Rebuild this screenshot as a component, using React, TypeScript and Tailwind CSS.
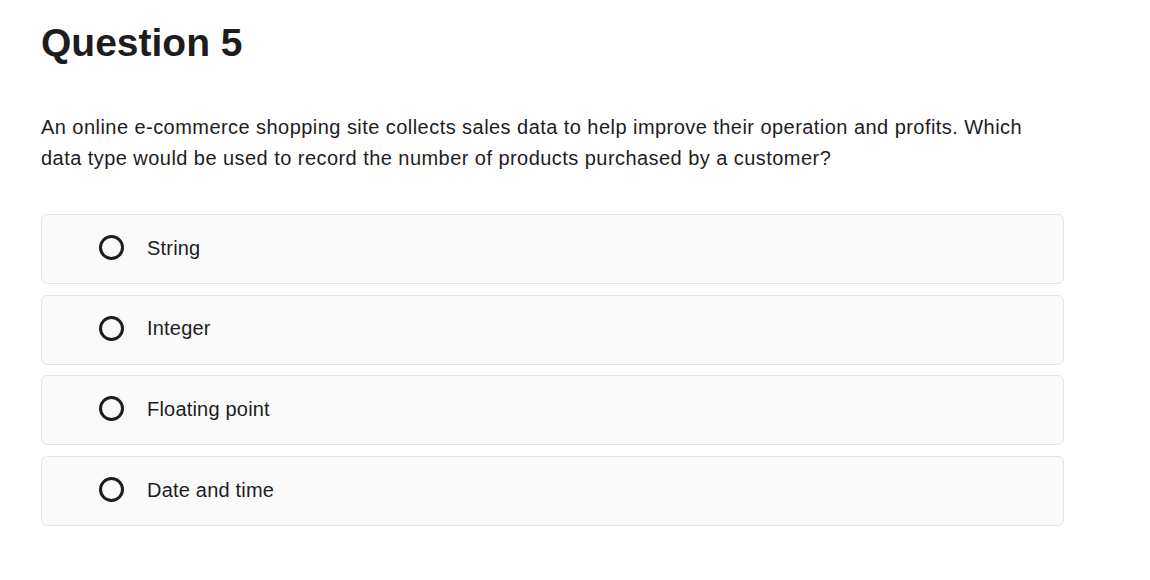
const OPTIONS = ['String', 'Integer', 'Floating point', 'Date and time'];

export default function App() {
  return (
    <div className="min-h-[580px] bg-white text-[#1d1d1f]" style={{ fontFamily: '"Liberation Sans", Arial, sans-serif' }}>
      <div className="pl-[41px] pt-[20px] w-[1064px]">
        <h1 className="text-[39px] font-bold leading-[46px]">Question 5</h1>

        <p className="mt-[46px] w-[1000px] text-[20px] leading-[31px] tracking-[0.45px]">
          An online e-commerce shopping site collects sales data to help improve their operation and profits. Which
          data type would be used to record the number of products purchased by a customer?
        </p>

        <div className="mt-[40px] flex flex-col gap-[10.7px]">
          {OPTIONS.map((opt) => (
            <label
              key={opt}
              className="flex items-center h-[70px] rounded-[6px] border border-[#e2e4e8] bg-[#fafafa] pl-[57px] pb-[3px] cursor-pointer"
            >
              <span className="w-[25px] h-[25px] rounded-full border-[3px] border-[#1d1d1f] shrink-0" />
              <span className="ml-[23px] text-[20px] tracking-[0.2px]">{opt}</span>
            </label>
          ))}
        </div>
      </div>
    </div>
  );
}
